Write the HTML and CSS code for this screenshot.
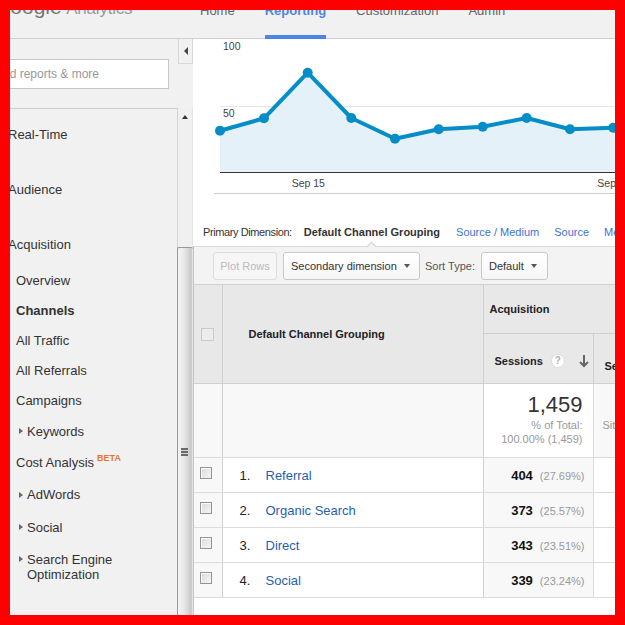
FILE: index.html
```html
<!DOCTYPE html>
<html>
<head>
<meta charset="utf-8">
<title>Channels - Google Analytics</title>
<link rel="stylesheet" href="styles.css">
</head>
<body>
<div class="frame">
  <div class="app">
    <header class="topbar">
      <div class="logo"><span class="g">Google</span> <span class="a">Analytics</span></div>
      <nav class="tabs">
        <span class="tab">Home</span>
        <span class="tab active">Reporting</span>
        <span class="tab">Customization</span>
        <span class="tab">Admin</span>
      </nav>
    </header>
    <div class="body">
      <aside class="sidebar">
        <div class="side-main">
          <div class="side-top">
            <div class="search">Find reports &amp; more</div>
          </div>
          <ul class="nav">
            <li class="top-item">Real-Time</li>
            <li class="top-item">Audience</li>
            <li class="top-item acq">Acquisition</li>
            <li class="sub">Overview</li>
            <li class="sub bold">Channels</li>
            <li class="sub">All Traffic</li>
            <li class="sub">All Referrals</li>
            <li class="sub">Campaigns</li>
            <li class="sub exp h32"><span class="tri"></span>Keywords</li>
            <li class="sub h31">Cost Analysis<span class="beta">BETA</span></li>
            <li class="sub exp h33"><span class="tri"></span>AdWords</li>
            <li class="sub exp h32"><span class="tri"></span>Social</li>
            <li class="sub exp seo"><span class="tri"></span><span>Search Engine<br>Optimization</span></li>
          </ul>
        </div>
        <div class="side-rail">
          <div class="toggle"><span class="tri-left"></span></div>
          <div class="rail-gap"></div>
          <div class="scroll">
            <span class="up"></span>
            <div class="thumb"><span class="grip"></span></div>
          </div>
        </div>
      </aside>
      <main class="main">
        <svg class="chart" width="440" height="155" viewBox="0 0 440 155">
          <line x1="27" y1="67.5" x2="440" y2="67.5" stroke="#e6e6e6" stroke-width="1"/>
          <polygon fill="#e4f1f8" points="27,133 27,91.7 71,79.3 114.7,33.7 158.3,79 202,99.7 245.7,90.3 289.7,87.7 333.7,79 377,90.3 420.3,88.7 464,90 464,133"/>
          <polyline fill="none" stroke="#058dc7" stroke-width="4" stroke-linejoin="round" points="27,91.7 71,79.3 114.7,33.7 158.3,79 202,99.7 245.7,90.3 289.7,87.7 333.7,79 377,90.3 420.3,88.7 464,90"/>
          <g fill="#058dc7">
            <circle cx="27" cy="91.7" r="5"/>
            <circle cx="71" cy="79.3" r="5"/>
            <circle cx="114.7" cy="33.7" r="5"/>
            <circle cx="158.3" cy="79" r="5"/>
            <circle cx="202" cy="99.7" r="5"/>
            <circle cx="245.7" cy="90.3" r="5"/>
            <circle cx="289.7" cy="87.7" r="5"/>
            <circle cx="333.7" cy="79" r="5"/>
            <circle cx="377" cy="90.3" r="5"/>
            <circle cx="420.3" cy="88.7" r="5"/>
          </g>
          <line x1="27" y1="133.5" x2="440" y2="133.5" stroke="#333" stroke-width="1"/>
          <line x1="21" y1="154.5" x2="440" y2="154.5" stroke="#cccccc" stroke-width="1"/>
          <g class="axis-text" fill="#444">
            <text x="30" y="11">100</text>
            <text x="30" y="77.7">50</text>
            <text x="115.3" y="147.7" text-anchor="middle">Sep 15</text>
            <text x="404.3" y="147.7">Sep 22</text>
          </g>
        </svg>
        <div class="primary">
          <span class="pd-label">Primary Dimension:</span>
          <span class="pd-current">Default Channel Grouping</span>
          <span class="pd-link">Source / Medium</span>
          <span class="pd-link">Source</span>
          <span class="pd-link">Medium</span>
        </div>
        <div class="data">
          <div class="toolbar">
            <span class="notch"></span>
            <span class="btn disabled">Plot Rows</span>
            <span class="btn sec">Secondary dimension <span class="caret"></span></span>
            <span class="sort-label">Sort Type:</span>
            <span class="btn def">Default <span class="caret"></span></span>
          </div>
          <table class="tbl">
            <colgroup>
              <col class="c-cb"><col class="c-dim"><col class="c-val"><col class="c-next">
            </colgroup>
            <thead>
              <tr class="h1">
                <th rowspan="2" class="cb-h"><span class="cbox-h"></span></th>
                <th rowspan="2" class="dim-h">Default Channel Grouping</th>
                <th colspan="2" class="group-h">Acquisition</th>
              </tr>
              <tr class="h2">
                <th class="val-h"><span class="sh">Sessions <span class="help">?</span>
                  <svg class="sort-arrow" width="10" height="14" viewBox="0 0 10 14"><path d="M5 1 V12 M1 8 L5 12 L9 8" fill="none" stroke="#666" stroke-width="2"/></svg></span></th>
                <th class="next-h">Sessions</th>
              </tr>
            </thead>
            <tbody>
              <tr class="total">
                <td class="cb"></td>
                <td class="dim"></td>
                <td class="val">
                  <div class="big">1,459</div>
                  <div class="small first">% of Total:</div>
                  <div class="small">100.00% (1,459)</div>
                </td>
                <td class="next"><div class="spacer"></div><div class="small left">Site Avg: 1,459 (0.00%)</div></td>
              </tr>
              <tr class="row">
                <td class="cb"><span class="cbox"></span></td>
                <td class="dim"><span class="num">1.</span><span class="link">Referral</span></td>
                <td class="val"><b>404</b><span class="pct">(27.69%)</span></td>
                <td class="next"></td>
              </tr>
              <tr class="row">
                <td class="cb"><span class="cbox"></span></td>
                <td class="dim"><span class="num">2.</span><span class="link">Organic Search</span></td>
                <td class="val"><b>373</b><span class="pct">(25.57%)</span></td>
                <td class="next"></td>
              </tr>
              <tr class="row">
                <td class="cb"><span class="cbox"></span></td>
                <td class="dim"><span class="num">3.</span><span class="link">Direct</span></td>
                <td class="val"><b>343</b><span class="pct">(23.51%)</span></td>
                <td class="next"></td>
              </tr>
              <tr class="row">
                <td class="cb"><span class="cbox"></span></td>
                <td class="dim"><span class="num">4.</span><span class="link">Social</span></td>
                <td class="val"><b>339</b><span class="pct">(23.24%)</span></td>
                <td class="next"></td>
              </tr>
            </tbody>
          </table>
        </div>
      </main>
    </div>
  </div>
</div>
</body>
</html>
```

FILE: styles.css
```css
* { box-sizing: border-box; }
html, body { margin: 0; padding: 0; }
body {
  font-family: "Liberation Sans", Arial, sans-serif;
  background: #fff;
  color: #333;
}
.frame {
  width: 625px;
  height: 625px;
  border: 10px solid #ff0000;
  overflow: hidden;
  background: #fff;
}
.app {
  width: 640px;
  height: 605px;
  margin-left: -30px;
  display: flex;
  flex-direction: column;
}

/* top bar */
.topbar {
  height: 29px;
  flex: none;
  background: #f1f1f1;
  border-bottom: 1px solid #cfcfcf;
  display: flex;
  align-items: flex-start;
}
.logo {
  width: 220px;
  flex: none;
  padding-left: 14px;
  margin-top: -13px;
  line-height: 20px;
  white-space: nowrap;
}
.logo .g { font-size: 21px; color: #777; }
.logo .a { font-size: 17px; color: #999; letter-spacing: -0.2px; }
.tabs { display: flex; gap: 30px; }
.tab {
  font-size: 13px;
  line-height: 13px;
  height: 35px;
  margin-top: -6px;
  color: #666;
  border-bottom: 4px solid transparent;
  white-space: nowrap;
}
.tab.active {
  color: #4a86e8;
  font-weight: bold;
  border-bottom-color: #4a86e8;
}

.body { flex: 1; display: flex; min-height: 0; }

/* sidebar */
.sidebar {
  width: 213px;
  flex: none;
  display: flex;
  background: #f1f1f1;
}
.side-main { width: 197px; display: flex; flex-direction: column; }
.side-top {
  height: 70px;
  flex: none;
  border-bottom: 1px solid #cccccc;
  padding-top: 20px;
  padding-left: 4px;
}
.search {
  width: 185px;
  height: 30px;
  border: 1px solid #c6c6c6;
  background: #fff;
  font-size: 12px;
  line-height: 28px;
  color: #999;
  padding-left: 8px;
  white-space: nowrap;
}
.nav {
  list-style: none;
  margin: 0;
  padding: 0;
  font-size: 13px;
  color: #333;
}
.top-item {
  height: 55px;
  padding-top: 18px;
  padding-left: 28px;
  line-height: 15px;
}
.top-item.acq { height: 46px; }
.sub {
  height: 30px;
  padding-left: 36px;
  display: flex;
  align-items: center;
  white-space: nowrap;
}
.sub.bold { font-weight: bold; }
.sub.h31 { height: 31px; }
.sub.h32 { height: 32px; }
.sub.h33 { height: 33px; }
.sub.exp { padding-left: 39px; }
.tri {
  width: 0;
  height: 0;
  border-left: 4px solid #666;
  border-top: 3.5px solid transparent;
  border-bottom: 3.5px solid transparent;
  margin-right: 4px;
  flex: none;
}
.sub.seo {
  height: 40px;
  align-items: flex-start;
  padding-top: 8.5px;
  line-height: 15px;
}
.sub.seo .tri { margin-top: 4px; }
.beta {
  font-size: 9px;
  font-weight: bold;
  color: #e8742c;
  margin-left: 3px;
  position: relative;
  top: -5px;
}

.side-rail { width: 16px; flex: none; display: flex; flex-direction: column; }
.toggle {
  height: 25px;
  flex: none;
  margin-left: 1px;
  border: 1px solid #d8d8d8;
  border-top: none;
  background: #f1f1f1;
  display: flex;
  align-items: center;
  justify-content: center;
}
.tri-left {
  width: 0;
  height: 0;
  border-right: 4px solid #444;
  border-top: 4px solid transparent;
  border-bottom: 4px solid transparent;
}
.rail-gap { height: 44px; flex: none; }
.scroll {
  flex: 1;
  border-left: 1px solid #d4d4d4;
  border-right: 1px solid #e4e4e4;
  background: #f0f0f0;
  display: flex;
  flex-direction: column;
  align-items: center;
}
.up {
  margin-top: 7px;
  width: 0;
  height: 0;
  border-bottom: 4px solid #333;
  border-left: 3.5px solid transparent;
  border-right: 3.5px solid transparent;
  flex: none;
}
.thumb {
  align-self: stretch;
  margin-left: -1px;
  margin-right: -1px;
  margin-top: 128px;
  flex: 1;
  border-left: 1px solid #999;
  border-top: 1px solid #999;
  border-radius: 2px 2px 0 0;
  background: linear-gradient(to right, #f4f4f4 0%, #eaeaea 35%, #d8d8d8 65%, #c6c6c6 88%, #f0f0f0 100%);
}
.grip {
  display: block;
  width: 7px;
  height: 8px;
  margin-top: 200px;
  margin-left: 3px;
  background: repeating-linear-gradient(to bottom, #6a6a6a 0, #6a6a6a 1.5px, #d8d8d8 1.5px, #d8d8d8 3px);
}

/* main */
.main {
  flex: 1;
  min-width: 0;
  overflow: hidden;
  background: #fff;
}
.chart { display: block; }
.axis-text text {
  font-family: "Liberation Sans", Arial, sans-serif;
  font-size: 10.5px;
}
.primary {
  height: 52px;
  display: flex;
  align-items: flex-end;
  padding: 0 0 7px 10px;
  font-size: 11px;
  line-height: 13px;
  white-space: nowrap;
  color: #333;
}
.pd-label { letter-spacing: -0.4px; margin-right: 12px; }
.pd-current { font-weight: bold; margin-right: 16px; }
.pd-link { color: #3b73d6; margin-right: 15px; }

.data {
  border-left: 1px solid #c4c4c4;
  height: 400px;
}
.toolbar {
  height: 38px;
  border-top: 1px solid #dcdcdc;
  background: #f3f3f3;
  display: flex;
  align-items: center;
  padding-left: 19px;
  position: relative;
}
.notch {
  position: absolute;
  top: -4.5px;
  left: 174px;
  width: 7px;
  height: 7px;
  background: #f3f3f3;
  border-top: 1px solid #d4d4d4;
  border-left: 1px solid #d4d4d4;
  transform: rotate(45deg);
}
.btn {
  height: 28px;
  border: 1px solid #c8c8c8;
  border-radius: 3px;
  background: linear-gradient(#ffffff, #f6f6f6);
  font-size: 11px;
  color: #333;
  display: flex;
  align-items: center;
  white-space: nowrap;
  flex: none;
}
.btn.disabled {
  width: 64px;
  justify-content: center;
  color: #bbb;
  border-color: #dddddd;
  background: #f6f6f6;
}
.btn.sec {
  width: 137px;
  margin-left: 6px;
  padding: 0 9px 0 7px;
  justify-content: space-between;
}
.btn.def {
  width: 67px;
  margin-left: 6px;
  padding: 0 10px 0 7px;
  justify-content: space-between;
}
.caret {
  width: 0;
  height: 0;
  border-top: 4px solid #555;
  border-left: 3.5px solid transparent;
  border-right: 3.5px solid transparent;
}
.sort-label { font-size: 11px; color: #555; margin-left: 5px; white-space: nowrap; }

/* table */
.tbl {
  border-collapse: collapse;
  table-layout: fixed;
  width: 600px;
  font-size: 13px;
}
.c-cb { width: 28px; }
.c-dim { width: 261px; }
.c-val { width: 110px; }
.c-next { width: 201px; }
.tbl th {
  background: #e8e8e8;
  border: 1px solid #cfcfcf;
  font-size: 11px;
  font-weight: bold;
  color: #222;
  text-align: left;
  padding: 0;
  white-space: nowrap;
}
.tbl th:first-child, .tbl td:first-child { border-left: none; }
.h1 th { height: 49px; }
.h2 th { height: 50px; }
.cb-h { padding-left: 7px !important; }
.cbox-h {
  display: block;
  width: 13px;
  height: 13px;
  border: 1px solid #c9c9c9;
  background: #ececec;
}
.dim-h { padding-left: 26px !important; }
.group-h { padding-left: 6px !important; }
.val-h { padding: 4px 0 0 11px !important; }
.sh { display: flex; align-items: center; }
.help {
  display: inline-block;
  width: 14px;
  height: 14px;
  border-radius: 50%;
  background: #fff;
  border: 1px solid #dcdcdc;
  color: #b0b0b0;
  font-size: 10px;
  line-height: 12px;
  text-align: center;
  margin-left: 8px;
}
.sort-arrow { margin-left: 14px; }
.next-h { padding: 14px 0 0 11px !important; }

.tbl td {
  border: 1px solid #dcdcdc;
  border-top: none;
  padding: 0;
  background: #fff;
}
.tbl td.cb, .tbl td.dim { border-right-color: #d0d0d0; }
.total td { height: 74px; vertical-align: top; }
.total td.cb, .total td.dim { background: #f8f8f8; }
.total td.val {
  background: #fff;
  text-align: right;
  padding: 9px 10px 0 0;
}
.total td.next { background: #f8f8f8; padding: 9px 0 0 9px; }
.big { font-size: 22px; line-height: 24px; color: #333; }
.small { font-size: 11px; line-height: 14px; color: #999; white-space: nowrap; }
.small.first { margin-top: 1px; }
.spacer { height: 25px; }

.row td { height: 35px; vertical-align: middle; }
.row td.cb { background: #f8f8f8; vertical-align: top; padding: 9px 0 0 6px; }
.cbox {
  display: block;
  width: 12px;
  height: 12px;
  border: 1px solid #939393;
  background: linear-gradient(135deg, #d9d9d9, #f6f6f6);
  box-shadow: inset 1px 1px 0 #ffffff;
}
.row td.dim { padding-left: 17px; white-space: nowrap; color: #222; }
.num { display: inline-block; width: 26px; }
.link { color: #1f5fb0; }
.row td.val {
  background: #f8f8f8;
  text-align: right;
  padding-right: 8px;
  white-space: nowrap;
}
.row td.val b { color: #111; }
.pct { font-size: 11px; color: #999; margin-left: 7px; }
```
